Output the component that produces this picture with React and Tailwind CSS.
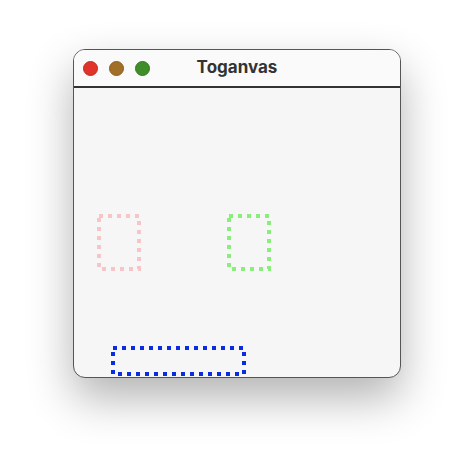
import React from 'react'

const shapes = [
  { x: 25, y: 128, w: 40, h: 53, color: '#f6c5c7' },
  { x: 155, y: 128, w: 40, h: 53, color: '#88ef7b' },
  { x: 39, y: 260, w: 131, h: 26, color: '#0a2be0' },
]

const App = () => {
  return (
    <div className="w-[474px] h-[474px] bg-white pl-[73px] pt-[49px]" style={{ fontFamily: 'Inter, "Liberation Sans", sans-serif' }}>
      <div className="w-[328px] h-[329px] flex flex-col rounded-[12px] border border-[#555] bg-[#f6f6f6] overflow-hidden shadow-[0_20px_45px_rgba(0,0,0,0.3)]">
        {/* Title bar */}
        <div className="relative h-[38px] flex items-center bg-[#fafafa] border-b-2 border-[#333] shrink-0">
          <div className="flex items-center gap-[11px] pl-[9px]">
            <span className="w-[15px] h-[15px] rounded-full bg-[#e0332a] border border-[#c22a22]" />
            <span className="w-[15px] h-[15px] rounded-full bg-[#a16f27] border border-[#8a5d1f]" />
            <span className="w-[15px] h-[15px] rounded-full bg-[#3f8e29] border border-[#347a21]" />
          </div>
          <div className="absolute inset-0 flex items-center justify-center text-[17px] font-bold text-[#333]">
            Toganvas
          </div>
        </div>

        {/* Canvas */}
        <div className="flex-1">
          <svg width="326" height="288" viewBox="0 0 326 288">
            {shapes.map((s, i) => (
              <rect
                key={i}
                x={s.x}
                y={s.y}
                width={s.w}
                height={s.h}
                fill="none"
                stroke={s.color}
                strokeWidth="4"
                strokeDasharray="4 5"
              />
            ))}
          </svg>
        </div>
      </div>
    </div>
  )
}

export default App
